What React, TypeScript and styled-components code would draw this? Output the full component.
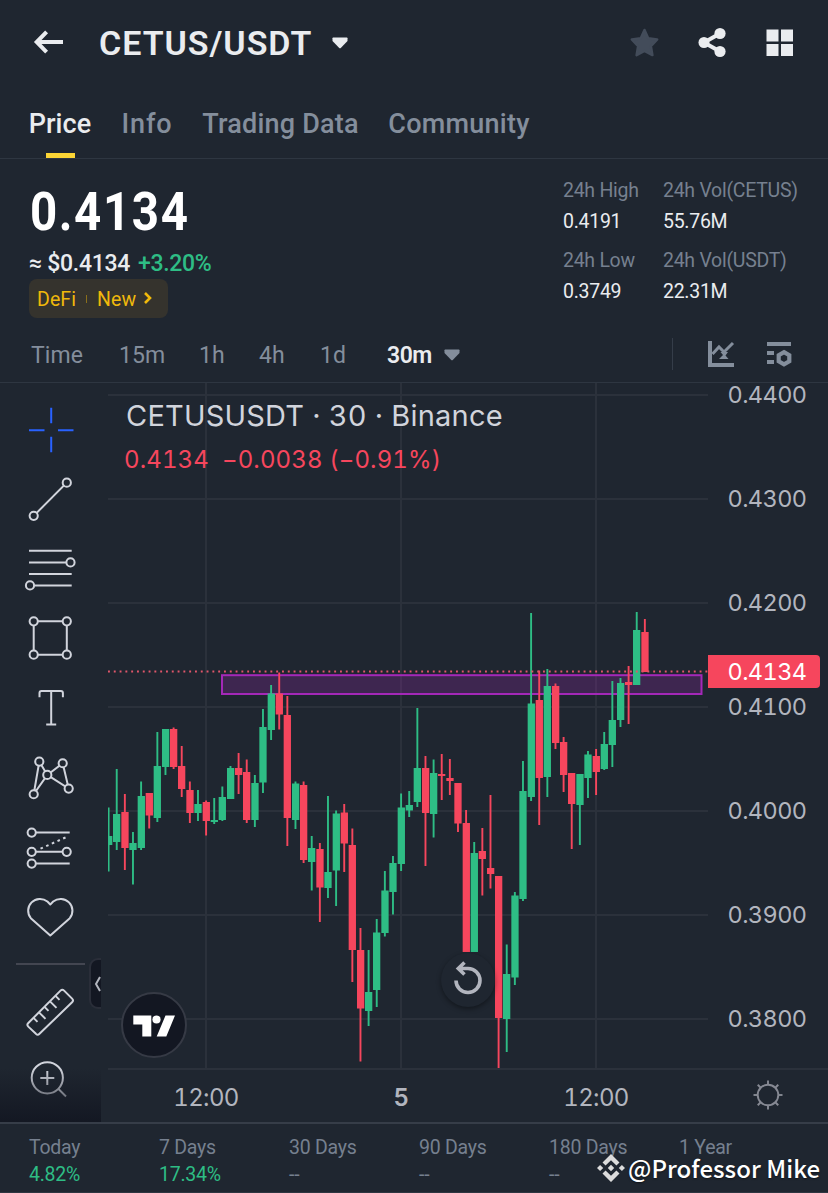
import React from "react";
import styled, { createGlobalStyle } from "styled-components";

const c = {
  bg: "#1f2630",
  line: "#2e3641",
  grid: "#2b313b",
  text: "#eaecef",
  muted: "#848e9c",
  green: "#2ebd85",
  red: "#f6465d",
  axis: "#b2b5be",
  dark: "#131722",
};

const GlobalStyle = createGlobalStyle`
  * { box-sizing: border-box; }
  body { margin: 0; background: ${c.bg}; }
`;

const Page = styled.main`
  position: relative;
  display: flex;
  flex-direction: column;
  width: 828px;
  height: 1193px;
  overflow: hidden;
  background: ${c.bg};
  color: ${c.text};
  font-family: Roboto, "Liberation Sans", sans-serif;
  white-space: nowrap;
`;

const Header = styled.header`
  display: flex;
  align-items: center;
  height: 86px;
  padding: 0 34px 0 32px;
`;

const Pair = styled.h1`
  margin: 0 20px 0 33px;
  font-size: 34px;
  font-weight: 600;
  line-height: 40px;
  letter-spacing: 0.95px;
  width: 213px;
`;

const HeaderActions = styled.div`
  display: flex;
  align-items: center;
  gap: 36.5px;
  margin-left: auto;
`;

const Tabs = styled.nav`
  display: flex;
  gap: 30px;
  height: 73px;
  padding: 20px 29px 0;
  border-bottom: 1px solid ${c.line};
`;

const Tab = styled.div<{ $active?: boolean; $w: number; $ls: number }>`
  display: flex;
  flex-direction: column;
  align-items: center;
  justify-content: space-between;
  width: ${(p) => p.$w}px;
  font-size: 27px;
  font-weight: 500;
  line-height: 36px;
  letter-spacing: ${(p) => p.$ls}px;
  color: ${(p) => (p.$active ? c.text : c.muted)};
  &::after {
    content: "";
    width: 29px;
    height: 5px;
    background: ${(p) => (p.$active ? "#fcd535" : "transparent")};
  }
`;

const Summary = styled.section`
  display: flex;
  justify-content: space-between;
  height: 171px;
  padding: 16px 29px 0;
`;

const BigPrice = styled.div`
  width: 180px;
  height: 72px;
  padding-left: 1px;
  font-size: 54px;
  font-weight: 700;
  line-height: 74px;
  letter-spacing: 1.8px;
  color: #fff;
  transform: scaleX(0.88);
  transform-origin: left;
`;

const SubPrice = styled.div`
  display: flex;
  gap: 8px;
  height: 32px;
  font-size: 23px;
  font-weight: 500;
  line-height: 34px;
  letter-spacing: -0.3px;
`;

const Change = styled.span`
  color: ${c.green};
`;

const Tag = styled.div`
  display: flex;
  align-items: center;
  width: 139px;
  height: 39px;
  padding: 2px 8px 0;
  border-radius: 8px;
  background: #35332d;
  color: #f0b90b;
  font-size: 19.5px;
  letter-spacing: 0.1px;
`;

const TagDivider = styled.i`
  width: 1px;
  height: 8px;
  margin: 0 10px;
  background: #8a6f1c;
`;

const Stats = styled.div`
  display: grid;
  grid-template-columns: 100px 136px;
  grid-auto-rows: 70px;
`;

const Stat = styled.div`
  display: flex;
  flex-direction: column;
  font-size: 19.5px;
  line-height: 31px;
  letter-spacing: -0.28px;
`;

const StatLabel = styled.span`
  color: #76808f;
`;

const Intervals = styled.nav`
  display: flex;
  align-items: center;
  height: 54px;
  padding: 1px 36px 2px 31px;
  border-bottom: 1px solid ${c.line};
  font-size: 23px;
  color: ${c.muted};
`;

const Interval = styled.span<{ $w: number; $active?: boolean; $ls?: number }>`
  width: ${(p) => p.$w}px;
  letter-spacing: ${(p) => p.$ls ?? 0.1}px;
  color: ${(p) => (p.$active ? c.text : c.muted)};
  font-weight: ${(p) => (p.$active ? 600 : 400)};
`;

const IntervalTools = styled.div`
  display: flex;
  align-items: center;
  gap: 30px;
  margin: -2px 0 0 auto;
  padding-left: 34px;
  height: 32px;
  border-left: 1px solid #353d49;
`;

const ChartArea = styled.section`
  position: relative;
  display: flex;
  height: 739px;
  font-family: Inter, "Liberation Sans", sans-serif;
  font-variant-numeric: tabular-nums;
`;

const Toolbar = styled.aside`
  position: relative;
  display: flex;
  flex-direction: column;
  width: 101px;
  height: 739px;
  padding-top: 12px;
  &::after {
    content: "";
    position: absolute;
    inset: auto 0 0 0;
    height: 54px;
    background: linear-gradient(rgba(19, 23, 34, 0), rgba(19, 23, 34, 0.95));
  }
`;

const ToolIcon = styled.svg`
  display: block;
  width: 101px;
  height: 69.7px;
  flex: none;
  fill: none;
  stroke: #d1d4dc;
  stroke-width: 2;
`;

const ToolSeparator = styled.hr`
  width: 69px;
  height: 2px;
  margin: 10.5px 0 11.5px 15.5px;
  border: 0;
  flex: none;
  background: #434651;
`;

const Collapse = styled.div`
  position: absolute;
  left: 89px;
  top: 575px;
  display: flex;
  align-items: center;
  justify-content: flex-end;
  width: 12px;
  height: 51px;
  border: 2px solid #2a2e39;
  border-right: 0;
  border-radius: 9px 0 0 9px;
  background: ${c.dark};
`;

const PlotColumn = styled.div`
  display: flex;
  flex-direction: column;
  width: 600px;
  margin-left: 7px;
`;

const Plot = styled.svg`
  display: block;
  flex: none;
`;

const TimeAxis = styled.div`
  display: flex;
  height: 53px;
  border-top: 2px solid ${c.grid};
`;

const TimeLabel = styled.span<{ $bold?: boolean }>`
  width: 195px;
  padding-left: 1px;
  padding-top: 1px;
  text-align: center;
  font-size: 24px;
  line-height: 53px;
  letter-spacing: -0.65px;
  font-weight: ${(p) => (p.$bold ? 600 : 400)};
  color: ${c.axis};
`;

const PriceColumn = styled.div`
  display: flex;
  flex-direction: column;
  width: 120px;
`;

const PriceAxis = styled.div`
  height: 685px;
  overflow: hidden;
`;

const PriceLabel = styled.div`
  height: 104px;
  padding-left: 19.5px;
  font-size: 23.5px;
  line-height: 104px;
  letter-spacing: -0.6px;
  color: ${c.axis};
  &:first-child {
    height: 64px;
    line-height: 24px;
  }
`;

const AxisCorner = styled.div`
  display: flex;
  align-items: center;
  justify-content: center;
  height: 54px;
  padding-bottom: 3px;
  border-top: 2px solid ${c.grid};
`;

const PriceBadge = styled.div`
  position: absolute;
  left: 708px;
  top: 272px;
  width: 112px;
  height: 33px;
  padding-left: 19.5px;
  border-radius: 0 4px 4px 0;
  background: ${c.red};
  color: #fff;
  font-size: 23.5px;
  line-height: 33px;
  letter-spacing: -0.6px;
`;

const Legend = styled.div`
  position: absolute;
  left: 124px;
  top: 11px;
`;

const LegendTitle = styled.div`
  padding-left: 2px;
  font-size: 29px;
  line-height: 44px;
  letter-spacing: 0.2px;
  color: #d1d4dc;
`;

const LegendValues = styled.div`
  display: flex;
  gap: 13px;
  font-size: 24px;
  line-height: 43px;
  letter-spacing: 0.12px;
  color: ${c.red};
`;

const RoundBadge = styled.div<{ $x: number; $y: number; $size: number; $logo?: boolean }>`
  position: absolute;
  left: ${(p) => p.$x}px;
  top: ${(p) => p.$y}px;
  display: flex;
  align-items: center;
  justify-content: center;
  width: ${(p) => p.$size}px;
  height: ${(p) => p.$size}px;
  padding-top: ${(p) => (p.$logo ? 2 : 0)}px;
  padding-bottom: ${(p) => (p.$logo ? 0 : 5)}px;
  border-radius: 50%;
  border: ${(p) => (p.$logo ? "2px solid #363a45" : "0")};
  background: ${(p) => (p.$logo ? c.dark : c.bg)};
  box-shadow: ${(p) => (p.$logo ? "none" : "0 2px 5px rgba(0,0,0,.4)")};
`;

const Performance = styled.footer`
  display: grid;
  grid-template-columns: repeat(6, 130px);
  height: 71px;
  padding: 9.5px 0 0 29px;
  border-top: 2px solid #363d48;
  border-bottom: 1px solid ${c.line};
`;

const Period = styled.div`
  display: flex;
  flex-direction: column;
  font-size: 19.5px;
  line-height: 27px;
  letter-spacing: -0.25px;
  color: #76808f;
`;

const PeriodValue = styled.span<{ $up: boolean }>`
  color: ${(p) => (p.$up ? c.green : "#76808f")};
`;

const Watermark = styled.div`
  position: absolute;
  left: 597px;
  top: 1149px;
  display: flex;
  align-items: center;
  gap: 3px;
  color: #fff;
  font-family: "Noto Sans CJK SC", "Noto Sans", sans-serif;
  font-size: 24px;
  font-weight: 500;
  line-height: 38px;
  letter-spacing: 0.05px;
  text-shadow: 0 1px 2px rgba(0, 0, 0, 0.5);
`;

/* [wick top, wick bottom, body top, body bottom, rising] */
type Candle = [number, number, number, number, 0 | 1];
const candles: Candle[] = [
  [807.5, 871.5, 836, 845, 1], [769, 850, 814, 842, 1], [794, 870, 812, 848, 0],
  [832, 884.5, 843, 850, 1], [781.5, 850, 796, 848, 1], [793, 828.5, 793, 815.5, 0],
  [732, 822, 766, 818, 1], [729, 775, 729, 767, 1], [727.5, 769, 729, 767, 0],
  [746, 797, 766, 789, 0], [781.5, 823, 790, 813, 0], [790, 821, 804, 813, 1],
  [800.5, 835.5, 802, 821, 0], [798, 824, 820, 822, 1], [786.5, 821, 797, 820, 1],
  [766, 799, 768, 799, 1], [753, 794, 768, 775, 0], [759.5, 823, 772, 820, 0],
  [775, 827, 783, 820, 1], [709, 793, 727, 782.5, 1], [685, 740, 693.5, 730, 1],
  [672.5, 729.5, 693.5, 714.5, 0], [696, 846, 715, 818, 0], [781.5, 829, 783.5, 820, 1],
  [781.5, 863, 785, 860, 0], [836, 890.5, 848, 862, 1], [843, 922, 849, 887.5, 0],
  [796, 898, 872, 888, 1], [810.5, 906, 813.5, 870.5, 1], [804, 872, 812.5, 843.5, 0],
  [828.5, 982, 845, 950, 0], [928, 1061.5, 950, 1008.5, 0], [950, 1026, 992, 1011, 1],
  [919, 1007, 932.5, 990, 1], [871, 936.5, 890.5, 933, 1], [856, 914.5, 863, 892, 1],
  [793.5, 871, 807.5, 864, 1], [791, 817, 805, 810.5, 1], [708, 807, 768, 802, 1],
  [756, 866, 768, 813, 0], [759.5, 837.5, 773, 814, 1], [754, 800, 774, 776, 0],
  [759, 795, 778, 781, 0], [783, 832, 783, 823.5, 0], [810, 952, 823, 952, 0],
  [842, 952, 853, 952, 1], [828, 895.5, 851, 859, 0], [795, 888.5, 868, 874, 0],
  [876, 1068, 876, 1018, 0], [944.5, 1052, 974, 1019, 1], [892, 985, 895.5, 977.5, 1],
  [761, 901, 791, 899, 1], [613, 801, 703.5, 797, 1], [670.5, 825, 700, 778, 0],
  [669, 797, 686, 777, 1], [683.5, 749, 686, 743, 0], [737, 792, 742, 775, 0],
  [773, 849, 773, 804, 0], [774, 845, 774, 805, 1], [751, 798, 754.5, 778, 1],
  [749, 795, 756, 772, 0], [732, 770, 744, 769, 1], [681, 767, 720, 745, 1],
  [678, 727, 683, 720, 1], [666, 724, 682, 685, 0], [612, 685, 630, 685, 1],
  [619, 672, 632, 672, 0],
];

const Caret = ({ color }: { color: string }) => (
  <svg width="16" height="12" viewBox="0 0 16 12" fill={color}>
    <path d="M.5 1.2Q.5.5 1.2.5h13.6Q15.5.5 15.5 1.2V4L9 10.8Q8 11.8 7 10.8L.5 4Z" />
  </svg>
);

const Nodes = ({ at }: { at: [number, number][] }) => (
  <>
    {at.map(([x, y]) => (
      <circle key={`${x},${y}`} cx={x} cy={y} r="4.1" fill={c.bg} />
    ))}
  </>
);

const Tool = ({ children, stroke }: { children: React.ReactNode; stroke?: string }) => (
  <ToolIcon viewBox="-50.5 -34.85 101 69.7" style={stroke ? { stroke } : undefined}>
    {children}
  </ToolIcon>
);

const CandleChart = () => (
  <Plot width="600" height="685" viewBox="108 383 600 685">
    {[395, 499, 603, 707, 811, 915, 1019].map((y) => (
      <rect key={y} x="108" y={y - 1} width="600" height="2" fill={c.grid} />
    ))}
    {[206, 401, 596].map((x) => (
      <rect key={x} x={x - 1} y="383" width="2" height="685" fill={c.grid} />
    ))}
    <rect x="222" y="675.2" width="479.5" height="18.8" fill="#9c27b0" fillOpacity=".25" stroke="#a428b8" strokeWidth="2" />
    {candles.map(([hi, lo, top, bottom, up], i) => {
      const x = 108.6 + i * 8.125;
      const left = Math.round((x - 3.6) * 3) / 3;
      return (
        <g key={i} fill={up ? c.green : c.red}>
          <rect x={x - 0.95} y={hi} width="1.9" height={lo - hi} />
          <rect x={left} y={top} width="7.3" height={bottom - top} />
        </g>
      );
    })}
    <line x1="108" x2="708" y1="671.5" y2="671.5" stroke="#e0566a" strokeWidth="1.9" strokeDasharray="1.9 3.9" />
  </Plot>
);

const periods = [
  ["Today", "4.82%"],
  ["7 Days", "17.34%"],
  ["30 Days", "--"],
  ["90 Days", "--"],
  ["180 Days", "--"],
  ["1 Year", "--"],
];

const stats = [
  ["24h High", "0.4191"],
  ["24h Vol(CETUS)", "55.76M"],
  ["24h Low", "0.3749"],
  ["24h Vol(USDT)", "22.31M"],
];

export default function App() {
  return (
    <Page>
      <GlobalStyle />
      <Header>
        <svg width="34" height="28" viewBox="0 0 34 28" fill="none" stroke={c.text} strokeWidth="4">
          <path d="M31 13H5.5M14.6 2.800L4.700 13l9.900 10.200" />
        </svg>
        <Pair>CETUS/USDT</Pair>
        <Caret color={c.text} />
        <HeaderActions>
          <svg width="32" height="32" viewBox="0 0 32 32" fill="#434c5a" stroke="#434c5a" strokeWidth="2.5" strokeLinejoin="round">
            <path d="M16.500 3l3.700 8.300 9 1.200-6.300 6.700 1.500 8.900L16.500 24l-7.900 4.100 1.500-8.900-6.300-6.700 9-1.200Z" />
          </svg>
          <svg width="30" height="32" viewBox="0 0 30 32" fill={c.text} stroke={c.text}>
            <path d="M7 15.500L23 6.500M7 15.500l16 9" strokeWidth="4" />
            <circle cx="7" cy="15.5" r="5.5" stroke="none" />
            <circle cx="23" cy="6.5" r="5.6" stroke="none" />
            <circle cx="23" cy="24.5" r="5.6" stroke="none" />
          </svg>
          <svg width="31" height="32" viewBox="0 0 31 32" fill={c.text}>
            <path d="M3.5 2.500h12v12h-12zM18 2.500h12v12H18zM3.500 17h12v12h-12zM18 17h12v12H18z" />
          </svg>
        </HeaderActions>
      </Header>

      <Tabs>
        <Tab $active $w={62} $ls={0.1}>Price</Tab>
        <Tab $w={52} $ls={0.9}>Info</Tab>
        <Tab $w={155} $ls={0.2}>Trading Data</Tab>
        <Tab $w={142} $ls={0.25}>Community</Tab>
      </Tabs>

      <Summary>
        <div>
          <BigPrice>0.4134</BigPrice>
          <SubPrice>
            <span>≈ $0.4134</span>
            <Change>+3.20%</Change>
          </SubPrice>
          <Tag>
            DeFi
            <TagDivider />
            New
            <svg width="10" height="14" viewBox="0 0 10 14" fill="none" stroke="#f0b90b" strokeWidth="2.6" style={{ marginLeft: 7 }}>
              <path d="M2 1l5 5-5 5" />
            </svg>
          </Tag>
        </div>
        <Stats>
          {stats.map(([label, value]) => (
            <Stat key={label}>
              <StatLabel>{label}</StatLabel>
              <span>{value}</span>
            </Stat>
          ))}
        </Stats>
      </Summary>

      <Intervals>
        <Interval $w={88}>Time</Interval>
        <Interval $w={80}>15m</Interval>
        <Interval $w={60}>1h</Interval>
        <Interval $w={61}>4h</Interval>
        <Interval $w={67}>1d</Interval>
        <Interval $w={57} $active $ls={-0.5}>30m</Interval>
        <Caret color={c.muted} />
        <IntervalTools>
          <svg width="29" height="28" viewBox="0 0 29 28" fill="none" stroke={c.muted} strokeWidth="4">
            <path d="M3 1v24.500M1 25h26" />
            <path d="M5.500 14l6.500-7 5 5L26 3" strokeWidth="3" />
            <path d="M12 19h9.500l-3-3.600L21 12h-7.500l2.500 3Z" fill={c.muted} stroke="none" />
          </svg>
          <svg width="26" height="28" viewBox="0 0 26 28" fill="none" stroke={c.muted}>
            <path d="M1 4h24M1 13h7M1 22h7" strokeWidth="3.8" />
            <path d="M18 12.200l5.300 3v6.100l-5.300 3-5.300-3v-6.100Z" strokeWidth="4.2" />
          </svg>
        </IntervalTools>
      </Intervals>

      <ChartArea>
        <Toolbar>
          <Tool stroke="#2962ff">
            <path d="M.7-22v15.500M.7 7v15.500M-21.500.3H-6M7.500.3H23" />
          </Tool>
          <Tool>
            <path d="M-16.800 16L16.300-17.200" />
            <Nodes at={[[-16.8, 16], [16.3, -17.2]]} />
          </Tool>
          <Tool>
            <path d="M-21.500-19.100h42.700M-21.500-7.400H16M-21.500 4.100h42.700M-16 15.600h37.200" />
            <Nodes at={[[20, -7.4], [-20.5, 15.6]]} />
          </Tool>
          <Tool>
            <path d="M-16.800-17.500h33.100v33.300h-33.100Z" />
            <Nodes at={[[-16.8, -17.5], [16.3, -17.5], [-16.8, 15.8], [16.3, 15.8]]} />
          </Tool>
          <Tool>
            <path d="M-11-11.500v-4.400q0-2 2-2H10.400q2 0 2 2v4.400M.7-17.900v33.500M-4.300 15.600h10" />
          </Tool>
          <Tool>
            <path d="M-16.800 15.400l5.600-32.700 8 13.400 15.400-11.700 6 25.300L-3.200-3.900Z" />
            <Nodes at={[[-11.2, -17.3], [12.2, -15.6], [-3.2, -3.9], [18.2, 9.7], [-16.8, 15.4]]} />
          </Tool>
          <Tool>
            <path d="M-15-15.300h34.200M-15 4h31M-15 15.700h34.200" />
            <path d="M-10 .8L18-11.700" strokeDasharray="2.6 3.6" />
            <Nodes at={[[-18.8, -15.3], [-18.8, 4], [16.2, 4], [-18.8, 15.7]]} />
          </Tool>
          <Tool>
            <path d="M-.2-13.400l-2.900-2.900A11.800 11.800 0 0 0-19.700.3L-.2 17.700 19.300.3A11.800 11.800 0 0 0 2.700-16.300Z" strokeLinejoin="round" />
          </Tool>
          <ToolSeparator />
          <Tool>
            <path d="M-22.200 11.200L10-21.200q1.800-1.800 3.600 0l8 8q1.800 1.800 0 3.600L-11 22q-1.800 1.800-3.600 0l-7.600-7.200q-1.800-1.800 0-3.600Z" />
            <path d="M-17 6l4 4M-11.500.5L-5 7M-6-5l4 4M-.5-10.500L6-4M5-16l4 4" />
          </Tool>
          <Tool>
            <circle cx="-3.2" cy="-3" r="15.6" />
            <path d="M-3.200-9.800V4.200M-10.200-2.800H3.800M8 8.200l7.500 7.500" />
          </Tool>
          <Collapse>
            <svg width="7" height="16" viewBox="0 0 7 16" fill="none" stroke="#b2b5be" strokeWidth="2">
              <path d="M6 1L2 8l4 7" />
            </svg>
          </Collapse>
        </Toolbar>

        <PlotColumn>
          <CandleChart />
          <TimeAxis>
            <TimeLabel>12:00</TimeLabel>
            <TimeLabel $bold>5</TimeLabel>
            <TimeLabel>12:00</TimeLabel>
          </TimeAxis>
        </PlotColumn>

        <PriceColumn>
          <PriceAxis>
            {["0.4400", "0.4300", "0.4200", "0.4100", "0.4000", "0.3900", "0.3800"].map((p) => (
              <PriceLabel key={p}>{p}</PriceLabel>
            ))}
          </PriceAxis>
          <AxisCorner>
            <svg width="30" height="30" viewBox="-15 -15 30 30" fill="none" stroke="#868993" strokeWidth="1.9">
              <circle r="10.3" />
              {[0, 45, 90, 135, 180, 225, 270, 315].map((a) => (
                <path key={a} d="M0-10.300v-4.200" transform={`rotate(${a})`} />
              ))}
            </svg>
          </AxisCorner>
        </PriceColumn>

        <Legend>
          <LegendTitle>CETUSUSDT · 30 · Binance</LegendTitle>
          <LegendValues>
            <span>0.4134</span>
            <span>−0.0038 (−0.91%)</span>
          </LegendValues>
        </Legend>
        <PriceBadge>0.4134</PriceBadge>
        <RoundBadge $x={121} $y={609} $size={66} $logo>
          <svg width="42" height="22" viewBox="0 0 42 22" fill="#fff">
            <path d="M.3.500h18v21h-9V9.500h-9ZM32.500.500H42L33.300 21.500H23.700Z" />
            <circle cx="23.5" cy="4.5" r="4.1" />
          </svg>
        </RoundBadge>
        <RoundBadge $x={441} $y={570} $size={54}>
          <svg width="30" height="36" viewBox="0 0 30 36" fill="none" stroke={c.axis} strokeWidth="3.6">
            <path d="M3 20.500A12 12 0 1 0 15 8.500H5M11.500 2.500L5.300 8.500l6.200 6" />
          </svg>
        </RoundBadge>
      </ChartArea>

      <Performance>
        {periods.map(([label, value]) => (
          <Period key={label}>
            {label}
            <PeriodValue $up={value !== "--"}>{value}</PeriodValue>
          </Period>
        ))}
      </Performance>

      <Watermark>
        <svg width="28" height="28" viewBox="-14 -14 28 28" fill="#dcdcdc">
          <path d="M0-14L8.500-5.500 5.400-2.400 0-7.800-5.400-2.400-8.500-5.500ZM0 14L8.500 5.500 5.400 2.400 0 7.800-5.400 2.400-8.500 5.500ZM-10.900-3.100L-7.800 0l-3.100 3.100L-14 0ZM10.900-3.100L14 0l-3.100 3.100L7.800 0ZM0-3.200L3.200 0 0 3.200-3.200 0Z" />
        </svg>
        @Professor Mike
      </Watermark>
    </Page>
  );
}
